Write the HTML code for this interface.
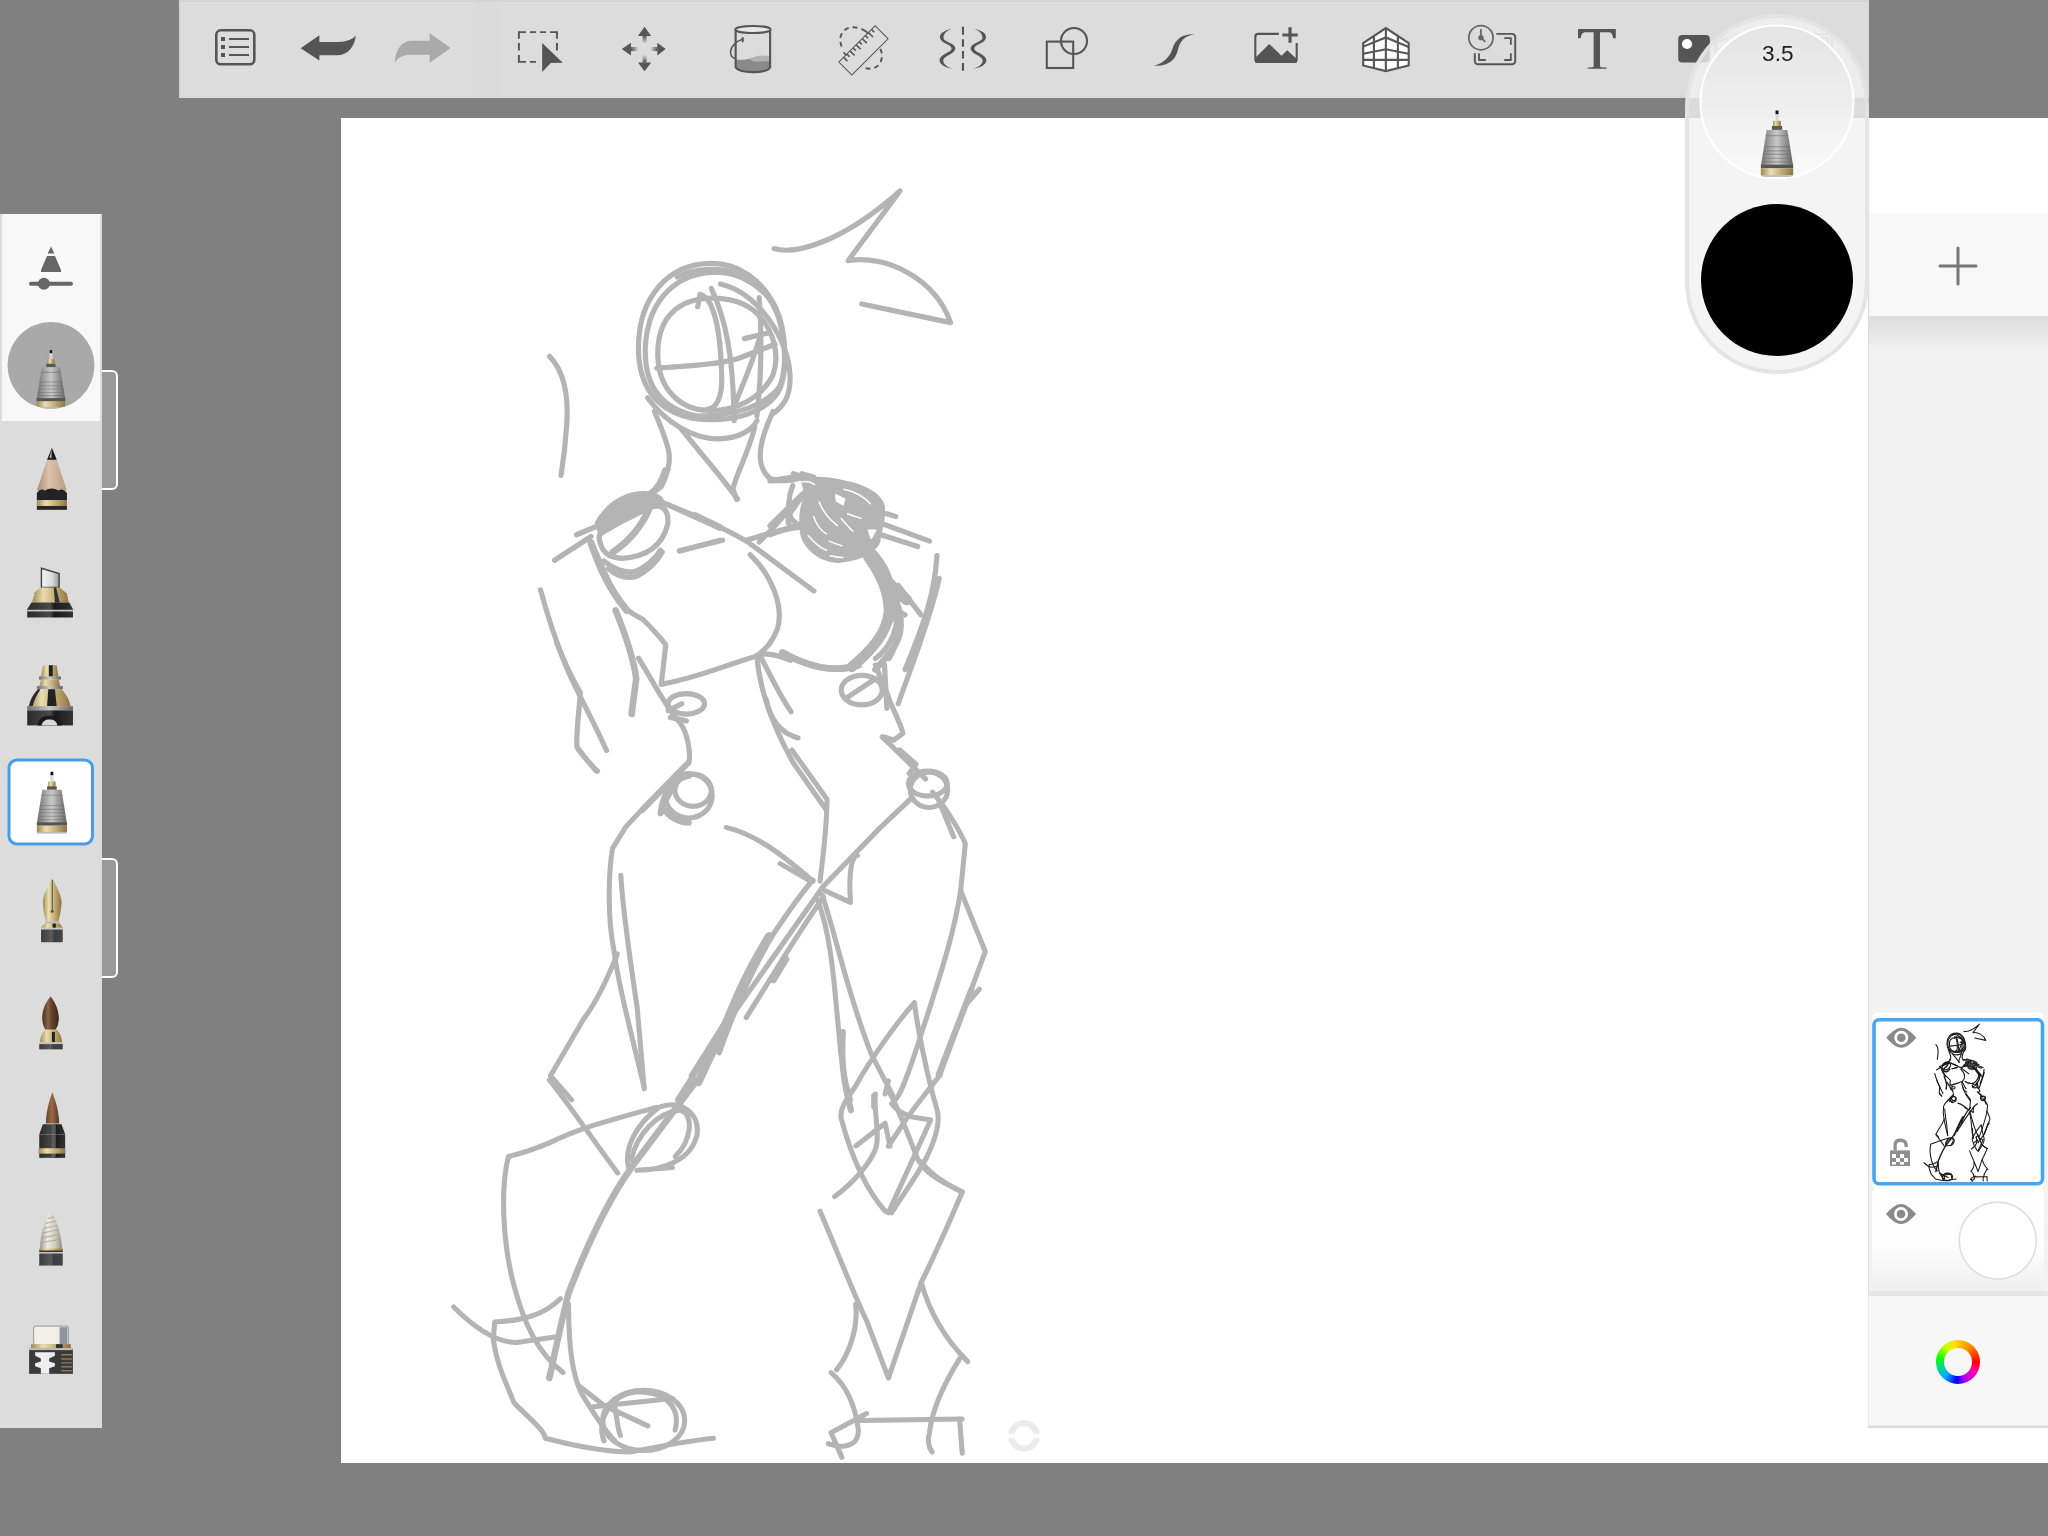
<!DOCTYPE html>
<html><head><meta charset="utf-8">
<style>
*{margin:0;padding:0;box-sizing:border-box}
html,body{width:2048px;height:1536px;overflow:hidden;background:#808080;font-family:"Liberation Sans",sans-serif;position:relative}
.abs{position:absolute}
#canvas{left:341px;top:118px;width:1707px;height:1345px;background:#fff}
#toolbar{left:179px;top:0;width:1690px;height:98px;background:#dcdcdc;border-top:2px solid #d4d4d4;border-left:2px solid #d6d6d6;border-bottom:2px solid #d8d8d8}
#lside{left:0;top:214px;width:102px;height:1214px;background:#dcdcdc}
#lside .top{left:2px;top:0;width:100px;height:207px;background:#f8f8f8}
.bracket{left:102px;width:16px;border:2.3px solid #fff;border-left:none;border-radius:0 6px 6px 0;background:#999}
#rpanel{left:1868px;top:213px;width:180px;height:1215px;background:#f2f2f2;border-left:1.5px solid #dcdcdc}
#plusbox{left:1px;top:0;width:179px;height:103px;background:#f8f8f8}
#pill{left:1685px;top:14px;width:184px;height:360px;border-radius:92px;background:rgba(241,241,241,0.8);border:4px solid rgba(226,226,226,0.9)}
</style></head><body>
<div id="canvas" class="abs"></div>
<svg class="abs" style="left:0;top:0" width="2048" height="1536" viewBox="0 0 2048 1536">
<g fill="none" stroke="#b4b4b4" stroke-linecap="round" stroke-linejoin="round">
<!-- chunk1: region 520,170 scale 4.389 -->
<g transform="translate(520,170) scale(0.22784)" stroke-width="22.8">
<path d="M1115,345 C1200,370 1400,330 1668,92 L1440,398 C1600,370 1820,470 1890,670 L1500,588"/>
<path d="M130,818 C190,880 215,980 205,1120 C200,1200 190,1280 180,1340"/>
<path d="M840,410 C650,410 520,560 520,780 C520,950 600,1060 760,1090 C900,1110 1060,1080 1130,980 C1180,900 1170,700 1120,600 C1060,480 960,410 840,410 Z"/>
<path d="M880,450 C700,440 560,560 550,780 C545,950 620,1050 780,1080 C950,1080 1080,1030 1140,950 C1180,850 1160,650 1090,560 C1040,500 960,455 880,450 Z"/>
<path d="M800,565 C680,580 600,660 605,820 C610,960 700,1050 820,1055 C950,1060 1060,1000 1110,900 C1140,820 1120,700 1030,620 C970,570 880,555 800,565 Z"/>
<path d="M690,470 C760,430 900,420 1000,470"/>
<path d="M560,1000 C640,1110 760,1180 870,1180 C960,1180 1020,1140 1040,1100"/>
<path d="M880,500 C1050,540 1180,750 1185,900 C1190,1000 1150,1040 1110,1070"/>
<path d="M780,600 L790,545 C850,560 880,700 885,900 C890,1000 860,1050 820,1050"/>
<path d="M840,520 C900,650 935,800 940,1100"/>
<path d="M600,870 C700,860 850,860 950,830 C1030,800 1080,780 1120,765"/>
<path d="M1050,740 C1020,850 970,960 930,1060"/>
<path d="M985,740 L1090,715"/>
<path d="M1050,560 C1060,700 1060,900 1040,1080"/>
<path d="M590,1060 C620,1130 650,1200 655,1250 C660,1300 640,1350 620,1390 L580,1420"/>
<path d="M710,1140 C790,1240 880,1340 955,1445"/>
<path d="M1030,1130 C1000,1250 950,1330 935,1400 L950,1445"/>
<path d="M1110,1060 C1080,1130 1050,1200 1055,1270 C1060,1320 1090,1360 1120,1360 L1250,1340"/>
</g>
<!-- chunk2: region 520,460 scale 4.389 -->
<g transform="translate(520,460) scale(0.22784)" stroke-width="22.8">
<path d="M600,175 C700,220 850,270 1000,360 L1290,575"/>
<path d="M700,398 L890,352"/>
<path d="M1010,415 C1100,500 1160,640 1130,740 C1100,820 1060,840 1040,860 C900,900 800,950 620,985 L640,810 C600,760 560,720 540,700 C480,670 440,640 420,600 L330,400"/>
<path d="M90,570 C120,680 160,800 200,900 C240,1000 300,1100 380,1275"/>
<path d="M160,800 C200,900 240,980 265,1020 C260,1100 245,1200 250,1260 C280,1300 310,1340 340,1365"/>
<path d="M420,660 C460,760 500,880 510,960 L490,1115" stroke-width="28.8"/>
<path d="M520,870 C600,1000 650,1100 700,1150 C740,1200 750,1300 740,1330"/>
<ellipse cx="730" cy="1070" rx="80" ry="45"/>
<path d="M650,1100 L710,1070 M660,1130 L730,1145"/>
<path d="M1040,860 C1050,1000 1100,1150 1200,1330 L1340,1530"/>
<path d="M1060,870 C1100,950 1150,1050 1190,1105 M1080,1050 C1100,1150 1150,1200 1220,1220"/>
<path d="M1160,845 C1250,900 1350,930 1450,915 C1550,850 1620,760 1640,650 C1650,540 1600,450 1540,390"/>
<path d="M1180,860 C1280,910 1380,940 1470,900 C1560,840 1630,740 1660,620" stroke-width="16.8"/>
<path d="M1000,350 C1100,320 1200,290 1220,290 M1050,360 C1130,280 1200,200 1250,140 M1200,60 L1290,90 L1180,240 C1170,280 1180,300 1220,290"/>
<path d="M1830,420 C1820,600 1760,750 1690,920 M1840,520 C1800,700 1720,900 1660,1070"/>
<path d="M1520,380 C1600,520 1660,600 1670,700 C1680,800 1620,850 1560,920" stroke-width="28.8"/>
<path d="M1640,650 L1690,680 M1660,550 L1760,680"/>
<ellipse cx="1500" cy="1010" rx="90" ry="65"/>
<path d="M1440,1040 L1560,960 M1560,900 C1600,1000 1620,1040 1620,1050"/>
<path d="M1620,1050 C1640,1100 1680,1180 1680,1200 L1640,1230 L1600,1215 M1590,1215 L1780,1400 M1600,900 L1610,1090"/>
<ellipse cx="1790" cy="1420" rx="85" ry="55"/>
<ellipse cx="760" cy="1450" rx="80" ry="70"/>
<path d="M740,1330 L540,1536 M690,1400 L620,1536"/>
</g>
<!-- right shoulder: region 770,460 scale 10.97 -->
<g transform="translate(770,460) scale(0.09116)" stroke-width="58">
<path fill="#b4b4b4" stroke="none" d="M330,200 C450,180 600,170 800,220 C1000,260 1180,330 1250,470 C1290,600 1230,750 1210,900 C1150,1050 950,1110 750,1130 C550,1120 400,1000 340,850 C300,700 320,500 380,380 Z"/>
<path d="M330,190 L350,150 L480,190 M250,280 C200,400 190,550 230,640 C280,700 330,720 370,730 M0,720 L350,380 M0,820 C100,780 200,750 330,740 M1100,650 L1750,890 M1000,750 L1620,950 M1280,590 L1380,620 M0,230 C100,220 200,240 330,200"/>
<path d="M1050,1000 C1150,1200 1300,1350 1500,1536" stroke-width="120"/>
<g stroke="#fff" stroke-width="16">
<path d="M810,320 C950,350 1050,420 1100,480 M540,460 C580,570 650,650 740,720 M480,620 C500,700 560,780 620,810 M780,640 C830,700 870,750 910,780 M850,590 C900,610 960,630 1000,640 M420,830 C480,900 540,960 620,990 M650,890 C700,910 740,930 790,940 M660,1050 C700,1060 750,1070 800,1070 M350,240 C400,230 450,240 490,270"/>
<path fill="#fff" d="M720,380 L820,430 L800,490 L730,450 Z M1080,770 L1160,770 L1110,860 Z"/>
</g>
</g>
<!-- left shoulder: region 540,470 scale 10.97 -->
<g transform="translate(540,470) scale(0.09116)" stroke-width="58">
<path fill="#b4b4b4" stroke="none" d="M600,580 C700,380 900,230 1150,230 C1300,240 1380,300 1360,380 C1250,420 1150,470 1050,520 C900,590 780,660 650,740 Z"/>
<path d="M400,710 L1100,420 M160,990 L560,730"/>
<path d="M800,900 C950,800 1100,650 1200,420" stroke-width="75"/>
<path d="M1250,400 C1350,380 1420,450 1400,600 C1350,800 1200,950 900,970 C800,960 700,940 660,800 C640,740 650,700 680,680"/>
<path d="M700,1000 C800,1080 900,1120 1000,1120 C1150,1100 1280,950 1320,880 M750,1080 C850,1170 950,1190 1050,1170 C1200,1100 1300,980 1340,900"/>
<path d="M560,800 C650,1050 750,1300 950,1536" stroke-width="80"/>
<path d="M1400,380 C1600,470 1800,560 1975,640 M1700,490 L1975,620 M1530,890 L1975,770 M1370,0 C1320,150 1250,230 1200,260"/>
</g>
<!-- right breast band: region 740,540 scale 5.908 -->
<g transform="translate(740,540) scale(0.16927)" stroke-width="31">
<path d="M760,100 C830,200 880,300 880,420 C870,550 780,650 660,750" stroke-width="62"/>
<path d="M800,120 C880,220 930,320 930,450 C920,560 880,640 800,700 M900,380 C930,480 950,600 880,700"/>
<path d="M250,665 C350,720 450,760 560,760 C620,760 660,750 700,740" stroke-width="40"/>
<path d="M100,680 C150,660 220,680 300,710"/>
</g>
<!-- chunk3: region 520,750 scale 4.2667 -->
<g transform="translate(520,750) scale(0.234375)" stroke-width="21.6">
<path d="M250,0 L325,90"/>
<path d="M720,50 C650,120 550,220 450,330 L395,420 C380,500 370,700 400,850 C420,1000 460,1150 530,1440"/>
<path d="M430,535 C440,700 470,900 500,1100 L530,1445"/>
<path d="M415,870 C380,960 330,1070 270,1150 L130,1390 L220,1493"/>
<ellipse cx="720" cy="195" rx="100" ry="95"/>
<path d="M620,260 C650,300 700,310 720,310 M600,270 C610,180 660,120 720,110" stroke-width="26.4"/>
<path d="M880,330 C1000,360 1100,430 1250,560 M1110,485 L1240,560"/>
<path d="M1160,0 L1310,210 C1310,300 1300,400 1280,560"/>



<path d="M1300,600 L1410,650 C1400,500 1420,450 1440,450"/>
<ellipse cx="1745" cy="170" rx="80" ry="75"/>
<path d="M1660,100 L1690,60 L1620,0"/>
<path d="M1760,180 C1820,250 1880,350 1900,400 L1880,600 C1850,800 1780,1000 1700,1250 C1650,1400 1620,1480 1600,1493"/>
<path d="M1780,200 L1850,370"/>
<path d="M1880,600 C1900,650 1940,750 1985,860 L1790,1390 M1960,1020 L1900,1090"/>
<path d="M1270,640 C1330,800 1340,1000 1360,1200 C1370,1350 1390,1430 1410,1493"/>
<path d="M1290,620 C1350,800 1400,1050 1500,1300 L1600,1493"/>

</g>
<!-- staff: region 640,780 scale 4.8 -->
<g transform="translate(640,780) scale(0.20833)" stroke-width="25">
<path d="M1300,90 L1152,230 L880,510 L640,850 L400,1190 L180,1536"/>
<path d="M830,480 C760,560 700,650 640,740 C560,870 480,1030 380,1310"/>
<path d="M880,560 C800,680 720,800 660,900 L510,1140"/>
<path d="M620,750 C560,850 500,950 420,1150 L280,1450" stroke-width="40"/>
<path d="M700,860 L640,960 M420,1150 L250,1420" stroke-width="32"/>
</g>
<!-- knee diamond: region 820,980 scale 6.144 -->
<g transform="translate(820,980) scale(0.16276)" stroke-width="31.2">
<path d="M420,680 C480,780 540,950 600,1100 C650,1180 700,1220 870,1300"/>
<path d="M580,140 C480,250 300,500 220,650 C150,750 120,800 130,850 C170,1000 250,1250 400,1420 L440,1430"/>
<path d="M580,140 C600,300 660,600 720,800 C740,880 700,1000 650,1100 C580,1230 500,1330 440,1430"/>
<path d="M737,584 C650,700 560,800 480,930 L420,1020"/>
<path d="M680,860 L560,840 C500,820 460,790 440,760 M680,860 L420,1430"/>
<path d="M340,700 C330,800 360,900 350,1000 C340,1100 200,1250 90,1330"/>
<path d="M220,1020 L400,880 L430,1020 M420,620 L400,700 M330,710 L330,780"/>
<path d="M140,320 C130,500 140,600 190,800 M930,60 L730,580" stroke-width="38.4"/>
</g>
<!-- chunk4: region 440,1080 scale 3.657 -->
<g transform="translate(440,1080) scale(0.27344)" stroke-width="18.6">
<path d="M400,0 C480,100 560,220 650,340"/>
<path d="M940,0 L700,320 C600,460 520,650 470,780 C440,900 420,1000 400,1090" stroke-width="24"/>
<path d="M690,320 C670,250 720,160 800,100 C880,70 950,120 940,200 C920,290 820,330 720,330 L850,320"/>
<path d="M700,290 C720,200 790,120 880,110 C930,130 920,220 860,280" />
<path d="M790,100 C650,140 520,170 400,230 C330,260 290,270 250,280 C220,400 230,600 270,750 C310,900 360,1000 450,1070"/>
<path d="M50,830 C120,900 200,960 280,960 L420,940"/>
<path d="M440,800 C380,860 300,880 200,885 L195,950 C210,1050 240,1100 270,1180 C340,1250 380,1280 385,1310 C500,1340 600,1360 700,1360 C800,1340 900,1320 1000,1310"/>
<path d="M470,820 C470,950 480,1080 520,1150 C580,1250 620,1300 640,1320"/>
<ellipse cx="745" cy="1245" rx="150" ry="110"/>
<path d="M600,1320 C570,1250 620,1150 720,1140 C830,1140 880,1200 860,1280"/>
<path d="M560,1195 L850,1165 M620,1200 L760,1265 M640,1200 C650,1250 650,1280 660,1300 M510,1120 L600,1190"/>

<path d="M1760,300 C1800,350 1850,380 1910,410"/>
<path d="M1390,480 C1450,620 1520,800 1560,880 L1640,1090 L1760,740 C1790,680 1850,550 1910,410"/>
<path d="M1520,820 C1530,900 1500,1000 1450,1060"/>
<path d="M1760,740 C1790,850 1850,950 1930,1030"/>
<path d="M1900,1020 C1850,1100 1800,1200 1790,1290 C1780,1320 1790,1350 1800,1360 M1900,1240 L1910,1365"/>
<path d="M1430,1070 C1490,1120 1520,1200 1530,1280 C1530,1320 1510,1340 1460,1340 L1420,1330 M1430,1290 L1470,1380 M1430,1290 L1560,1220 M1540,1245 L1910,1240"/>
</g>
</g>
<circle cx="1024" cy="1435.8" r="12.8" fill="none" stroke="#ebebeb" stroke-width="6.2"/><rect x="1005" y="1433.8" width="38" height="4.1" fill="#fff"/>
</svg>

<div id="toolbar" class="abs"></div>
<svg class="abs" style="left:0;top:0" width="2048" height="100" viewBox="0 0 2048 100">
<defs>
<linearGradient id="gU" x1="0" y1="0" x2="0" y2="1"><stop offset="0" stop-color="#555"/><stop offset="1" stop-color="#555" stop-opacity="0"/></linearGradient>
<linearGradient id="gD" x1="0" y1="1" x2="0" y2="0"><stop offset="0" stop-color="#555"/><stop offset="1" stop-color="#555" stop-opacity="0"/></linearGradient>
<linearGradient id="gL" x1="0" y1="0" x2="1" y2="0"><stop offset="0" stop-color="#555"/><stop offset="1" stop-color="#555" stop-opacity="0"/></linearGradient>
<linearGradient id="gR" x1="1" y1="0" x2="0" y2="0"><stop offset="0" stop-color="#555"/><stop offset="1" stop-color="#555" stop-opacity="0"/></linearGradient>
</defs>
<!-- separator shade -->
<rect x="473" y="2" width="26" height="94" fill="#d8d8d8" opacity="0.6"/>
<!-- list -->
<rect x="216.3" y="30.3" width="38" height="34" rx="4.5" fill="none" stroke="#555" stroke-width="2.6"/>
<g fill="#555"><rect x="221" y="37" width="4" height="4"/><rect x="221" y="45" width="4" height="4"/><rect x="221" y="53" width="4" height="4"/></g>
<g stroke="#555" stroke-width="2.2"><path d="M229,39 L249,39 M229,47 L249,47 M229,55 L249,55"/></g>
<!-- undo -->
<path fill="#555" d="M300.6,48.3 L319.4,35.2 L319.4,42 L338,42 C347,42 353,39 355.8,35.6 C355,46 348,55.2 338,55.2 L319.4,55.2 L319.4,60.5 Z"/>
<!-- redo -->
<path fill="#aaa" d="M450.5,48.1 L429.7,33.2 L429.7,40.7 L412,40.7 C402,40.7 395,50 394.9,62.7 C398,57 404,54.8 412,54.8 L429.7,54.8 L429.7,62.7 Z"/>
<!-- select -->
<g transform="translate(500,15) scale(0.087889)">
<path fill="none" stroke="#555" stroke-width="22" d="M215,270 L215,195 L295,195 M570,195 L648,195 L648,270 M215,455 L215,533 L295,533 M215,320 L215,405 M340,195 L410,195 M455,195 L525,195 M648,320 L648,405 M340,533 L410,533"/>
<path fill="#555" d="M480,318 L715,543 L578,545 L480,648 Z"/>
<!-- move -->
<g fill="#555">
<path d="M1570,238 L1645,135 L1720,238 Z M1570,540 L1645,640 L1720,540 Z M1490,315 L1385,388 L1490,460 Z M1790,315 L1885,388 L1790,460 Z"/>
<rect x="1622" y="236" width="46" height="90" fill="url(#gU)"/>
<rect x="1622" y="452" width="46" height="90" fill="url(#gD)"/>
<rect x="1488" y="365" width="90" height="46" fill="url(#gL)"/>
<rect x="1710" y="365" width="82" height="46" fill="url(#gR)"/>
</g>
</g>
<!-- bucket -->
<g transform="translate(720,15) scale(0.087889)">
<path fill="#8a8a8a" d="M175,505 C260,520 330,500 400,480 C470,460 540,470 570,480 L570,595 C540,640 440,650 375,650 C300,650 200,640 175,595 Z"/>
<path fill="#b2b2b2" d="M330,500 C400,470 470,450 570,470 L570,525 C520,520 450,540 380,530 Z"/>
<path fill="none" stroke="#555" stroke-width="24" d="M178,170 L178,595 C200,640 300,650 375,650 C450,650 550,640 570,595 L570,170"/>
<ellipse cx="375" cy="165" rx="200" ry="40" fill="#e8e8e8" stroke="#555" stroke-width="24"/>
<path fill="none" stroke="#555" stroke-width="16" d="M258,275 C180,300 120,360 120,420 C120,470 150,490 178,495"/>
<ellipse cx="258" cy="280" rx="14" ry="32" fill="#555"/>
</g>
<!-- ruler -->
<g transform="translate(720,15) scale(0.087889)">
<g fill="none" stroke="#555" stroke-width="22">
<path d="M1360,535 L1765,130 L1905,270 L1500,675 Z"/>
<path stroke-dasharray="55,45" d="M1655,185 C1610,150 1540,130 1470,145 C1400,165 1360,230 1370,300 C1375,340 1385,370 1400,395"/>
<path stroke-dasharray="55,45" d="M1825,385 C1850,440 1850,510 1810,565 C1770,610 1700,625 1620,595"/>
<path fill="#dcdcdc" stroke="none" d="M1360,535 L1765,130 L1905,270 L1500,675 Z"/>
<path stroke-width="18" d="M1410,485 L1450,525 M1445,445 L1475,475 M1480,410 L1530,460 M1515,375 L1545,405 M1550,340 L1600,390 M1585,305 L1615,335 M1620,270 L1670,320 M1655,235 L1685,265 M1690,200 L1740,250 M1725,165 L1755,195 M1405,425 L1440,460 M1655,180 L1690,215"/>
</g>
</g>
<!-- symmetry -->
<g transform="translate(925,15) scale(0.087889)" fill="#555">
<path fill="none" stroke="#555" stroke-width="24" d="M432,135 L432,225 M432,275 L432,360 M432,410 L432,495 M432,545 L432,635"/>
<path d="M305,158 C220,170 160,210 170,262 C185,325 300,335 303,380 C305,425 165,445 165,515 C168,565 230,598 310,612 C250,592 208,560 208,515 C208,465 345,440 345,380 C345,320 210,305 210,262 C210,215 240,178 305,158 Z"/>
<path d="M 559,158 C 644,170 704,210 694,262 C 679,325 564,335 561,380 C 559,425 699,445 699,515 C 696,565 634,598 554,612 C 614,592 656,560 656,515 C 656,465 519,440 519,380 C 519,320 654,305 654,262 C 654,215 624,178 559,158 Z"/>
</g>
<!-- shapes -->
<g fill="none" stroke="#555" stroke-width="2.1">
<rect x="1046.8" y="41.6" width="26.4" height="26.4"/>
<circle cx="1074" cy="41" r="13"/>
</g>
<!-- s-curve -->
<g transform="translate(1140,15) scale(0.087889)">
<path fill="#555" d="M155,575 C260,550 335,490 370,380 C405,270 480,215 625,215 C515,235 455,290 432,395 C405,510 320,590 155,575 Z"/>
<!-- image+ -->
<path fill="none" stroke="#555" stroke-width="24" d="M1580,215 L1345,215 Q1312,215 1312,248 L1312,500 Q1312,533 1345,533 L1750,533 Q1783,533 1783,500 L1783,320"/>
<path fill="#555" d="M1312,485 L1470,330 L1610,465 L1675,400 L1783,500 L1783,545 L1312,545 Z"/>
<path fill="none" stroke="#555" stroke-width="36" d="M1620,228 L1795,228 M1707,140 L1707,315"/>
</g>
<!-- perspective grid -->
<g transform="translate(1350,15) scale(0.087889)" stroke="#555" stroke-width="24" stroke-linejoin="miter">
<path fill="#fff" d="M150,320 L408,148 L668,320 L668,575 L408,638 L150,575 Z"/>
<path fill="none" d="M272,240 L272,598 M408,148 L408,638 M545,240 L545,598 M150,360 L408,255 L668,365 M150,440 L408,390 L668,440 M150,510 L668,510"/>
</g>
<!-- clock frame -->
<g transform="translate(1350,15) scale(0.087889)" fill="none" stroke="#555">
<circle cx="1490" cy="258" r="138" stroke="#666" stroke-width="20"/>
<path stroke="#666" stroke-width="20" d="M1490,160 L1490,258 L1540,305"/>
<circle cx="1490" cy="258" r="30" fill="#666" stroke="none"/>
<path stroke-width="22" d="M1665,215 L1840,215 Q1880,215 1880,255 L1880,520 Q1880,560 1840,560 L1460,560 Q1420,560 1420,520 L1420,435"/>
<path stroke-width="20" d="M1755,262 L1830,262 L1830,338 M1468,435 L1468,512 L1545,512 M1755,512 L1830,512 L1830,435"/>
</g>
<!-- T -->
<g transform="translate(1560,15) scale(0.087889)">
<path fill="#555" d="M205,160 L635,160 L635,265 L605,265 C600,230 590,200 560,195 L455,195 L455,580 C455,592 470,598 530,598 L530,612 L315,612 L315,598 C370,598 383,592 383,580 L383,195 L280,195 C250,200 240,230 235,265 L205,265 Z"/>
<rect x="1345" y="228" width="360" height="312" rx="45" fill="#555"/>
<circle cx="1445" cy="330" r="58" fill="#fff"/>
<path fill="none" stroke="#b0b0b0" stroke-width="22" d="M1775,430 L1775,320 L1895,265 L1895,300"/>
</g>
<path fill="none" stroke="#b0b0b0" stroke-width="2" d="M1812,34 L1832,34 L1832,47 M1820,38 L1828,38 L1828,43"/>
</svg>

<div id="lside" class="abs"></div>
<svg class="abs" style="left:0;top:200px" width="130" height="1240" viewBox="0 200 130 1240">
<defs>
<linearGradient id="silv" x1="0" y1="0" x2="1" y2="0">
<stop offset="0" stop-color="#707070"/><stop offset="0.3" stop-color="#a8a8a8"/><stop offset="0.5" stop-color="#c8c8c8"/><stop offset="0.75" stop-color="#959595"/><stop offset="1" stop-color="#666"/></linearGradient>
<linearGradient id="gold" x1="0" y1="0" x2="1" y2="0">
<stop offset="0" stop-color="#a08850"/><stop offset="0.3" stop-color="#e9ddb0"/><stop offset="0.6" stop-color="#c7b27a"/><stop offset="1" stop-color="#8c7440"/></linearGradient>
<linearGradient id="blk" x1="0" y1="0" x2="1" y2="0">
<stop offset="0" stop-color="#2a2a2a"/><stop offset="0.5" stop-color="#4a4a4a"/><stop offset="0.6" stop-color="#1a1a1a"/><stop offset="1" stop-color="#333"/></linearGradient>
<linearGradient id="dgrey" x1="0" y1="0" x2="1" y2="0">
<stop offset="0" stop-color="#3c3c3c"/><stop offset="0.5" stop-color="#5a5a5a"/><stop offset="0.6" stop-color="#3a3f44"/><stop offset="1" stop-color="#444"/></linearGradient>
<linearGradient id="wood" x1="0" y1="0" x2="1" y2="0">
<stop offset="0" stop-color="#a88a70"/><stop offset="0.4" stop-color="#dcc3ad"/><stop offset="1" stop-color="#b69a82"/></linearGradient>
<linearGradient id="brown" x1="0" y1="0" x2="1" y2="0">
<stop offset="0" stop-color="#4a3020"/><stop offset="0.35" stop-color="#8a6548"/><stop offset="0.6" stop-color="#5e3f28"/><stop offset="1" stop-color="#3e281a"/></linearGradient>
<linearGradient id="brown2" x1="0" y1="0" x2="1" y2="0">
<stop offset="0" stop-color="#6a4228"/><stop offset="0.45" stop-color="#9a6a48"/><stop offset="1" stop-color="#5a3620"/></linearGradient>
<linearGradient id="cone" x1="0" y1="0" x2="1" y2="0">
<stop offset="0" stop-color="#9d9a90"/><stop offset="0.35" stop-color="#eeeae0"/><stop offset="0.7" stop-color="#cfcabd"/><stop offset="1" stop-color="#8e8a80"/></linearGradient>
<g id="techpen">
<!-- in zoom coords (scale 8.306), tip at top -->
<rect x="252" y="970" width="26" height="80" fill="#d8d8d8"/>
<rect x="254" y="970" width="22" height="28" fill="#111"/>
<rect x="235" y="1050" width="60" height="40" fill="url(#gold)"/>
<rect x="225" y="1090" width="80" height="30" fill="#5a5a52"/>
<path d="M185,1120 L345,1120 L390,1400 L140,1400 Z" fill="url(#silv)"/>
<g stroke="#6a6a6a" stroke-width="9" opacity="0.45"><path d="M178,1165 L352,1165 M166,1250 L364,1250 M162,1282 L368,1282 M158,1310 L372,1310 M154,1340 L376,1340 M150,1368 L380,1368"/></g>
<rect x="140" y="1390" width="250" height="28" fill="#555"/>
<rect x="140" y="1418" width="250" height="52" fill="url(#gold)"/>
<rect x="140" y="1470" width="250" height="14" fill="#bbb"/>
</g>
</defs>
<!-- top white section -->
<rect x="2" y="214" width="98" height="207" fill="#f8f8f8"/>
<!-- brush size icon -->
<g fill="#666">
<path d="M47.6,253.5 L54.4,253.5 L51,246.5 Z"/>
<path d="M47,256 L55,256 L61,270 L61,272 L41,272 L41,270 Z"/>
<path d="M31,283.8 L71,283.8" stroke="#666" stroke-width="4" stroke-linecap="round"/>
<circle cx="43.9" cy="283.8" r="6"/>
</g>
<!-- grey circle with pen -->
<circle cx="51" cy="365.4" r="43.5" fill="#a9a9a9"/>
<clipPath id="cc"><circle cx="51" cy="365.4" r="43.5"/></clipPath>
<g clip-path="url(#cc)"><g transform="translate(20.6,238.9) scale(0.11456)"><use href="#techpen"/></g></g>
<!-- pencil -->
<g transform="translate(20,440) scale(0.12039)">
<path d="M225,165 L305,165 L390,420 L140,420 Z" fill="url(#wood)"/>
<path d="M265,65 L225,165 L305,165 Z" fill="#1a1a1a"/>
<path d="M262,75 L245,150 L262,150 Z" fill="#bbb"/>
<path d="M140,440 Q172,395 205,420 Q262,385 320,420 Q355,395 390,440 L390,500 L140,500 Z" fill="#232323"/>
<rect x="140" y="500" width="250" height="48" fill="url(#gold)"/>
<rect x="140" y="548" width="250" height="32" fill="#262626"/>
</g>
<!-- marker -->
<g transform="translate(20,440) scale(0.12039)">
<linearGradient id="felt" x1="0" y1="0" x2="1" y2="0"><stop offset="0" stop-color="#f4f4f4"/><stop offset="0.6" stop-color="#dadada"/><stop offset="1" stop-color="#9a9a9a"/></linearGradient><path d="M178,1065 L325,1110 L325,1225 L178,1225 Z" fill="url(#felt)" stroke="#444" stroke-width="12"/>
<path d="M165,1225 L330,1225 L395,1280 L110,1280 Z" fill="url(#gold)"/>
<path d="M120,1280 L390,1280 L405,1350 L100,1350 Z" fill="url(#gold)"/>
<path d="M280,1225 L300,1225 L330,1350 L290,1350 Z" fill="#2e3338"/>
<path d="M95,1350 L410,1350 L440,1405 L440,1475 L60,1475 L60,1405 Z" fill="url(#blk)"/>
<rect x="60" y="1410" width="380" height="14" fill="#c8c8c8"/>
</g>
<!-- ink/airbrush pen -->
<g transform="translate(20,655) scale(0.12039)">
<path d="M190,85 L305,85 L320,180 L175,180 Z" fill="url(#gold)"/>
<rect x="240" y="85" width="32" height="95" fill="#222"/>
<rect x="158" y="178" width="182" height="27" fill="url(#silv)"/>
<path d="M175,205 L320,205 L335,260 L160,260 Z" fill="url(#gold)"/>
<rect x="140" y="258" width="215" height="27" fill="url(#silv)"/>
<path d="M150,285 L345,285 C380,320 410,370 420,425 L75,425 C85,370 115,320 150,285 Z" fill="url(#gold)"/>
<path d="M235,285 L290,285 L305,425 L225,425 Z" fill="#222"/>
<path d="M150,285 L170,285 C140,330 115,380 105,425 L75,425 C85,370 115,320 150,285 Z" fill="#2a2a2a"/>
<rect x="60" y="425" width="380" height="35" fill="url(#silv)"/>
<rect x="60" y="460" width="380" height="125" fill="url(#blk)"/>
<path d="M145,585 C150,530 195,505 245,505 C295,505 340,530 345,585 Z" fill="#1a1a1a"/>
<path d="M180,585 C185,550 210,535 245,535 C280,535 305,550 310,585 Z" fill="#d8d8d8"/>
</g>
<!-- selected box -->
<rect x="9" y="760" width="83.5" height="84" rx="8" fill="#fff" stroke="#4a9be6" stroke-width="3"/>
<g transform="translate(20,655) scale(0.12039)"><use href="#techpen"/></g>
<!-- fountain nib -->
<g transform="translate(20,870) scale(0.12039)">
<path d="M268,70 C300,130 340,200 345,260 C345,330 330,380 320,430 L215,430 C205,380 190,330 190,260 C195,200 235,130 268,70 Z" fill="url(#gold)"/>
<path d="M268,80 L268,340" stroke="#555" stroke-width="9"/>
<circle cx="268" cy="343" r="13" fill="#555"/>
<rect x="208" y="428" width="120" height="18" fill="#bbb"/>
<path d="M205,445 L330,445 L355,480 L175,480 Z" fill="url(#gold)"/>
<rect x="270" y="445" width="28" height="35" fill="#222"/>
<rect x="175" y="480" width="180" height="14" fill="#c8c8c8"/>
<rect x="175" y="494" width="180" height="106" fill="url(#dgrey)"/>
</g>
<!-- round brush -->
<g transform="translate(20,870) scale(0.12039)">
<path d="M255,1050 C310,1120 330,1200 320,1260 C315,1300 300,1320 290,1330 L215,1330 C195,1310 185,1270 185,1230 C185,1160 210,1100 255,1050 Z" fill="url(#brown)"/>
<path d="M215,1325 L300,1325 C325,1340 345,1380 350,1430 L165,1430 C170,1380 190,1340 215,1325 Z" fill="url(#gold)"/>
<rect x="265" y="1345" width="25" height="85" fill="#222"/>
<rect x="160" y="1430" width="195" height="16" fill="#c0c0c0"/>
<rect x="160" y="1446" width="195" height="44" fill="url(#dgrey)"/>
</g>
<!-- pointed brush -->
<g transform="translate(20,1085) scale(0.12039)">
<path d="M268,60 C300,140 325,230 325,320 L215,320 C215,230 240,140 268,60 Z" fill="url(#brown2)"/>
<path d="M190,325 L345,325 L375,410 L160,410 Z" fill="url(#blk)"/>
<rect x="160" y="410" width="215" height="195" fill="url(#blk)"/>
<rect x="268" y="330" width="30" height="270" fill="#888" opacity="0.5"/>
<rect x="155" y="525" width="220" height="45" fill="url(#gold)"/>
</g>
<!-- spiral cone -->
<g transform="translate(20,1085) scale(0.12039)">
<path d="M255,1045 C300,1120 340,1230 350,1360 L165,1360 C170,1230 205,1120 255,1045 Z" fill="url(#cone)"/>
<g stroke="#a9a598" stroke-width="9" opacity="0.8"><path d="M230,1110 L285,1095 M215,1150 L300,1130 M200,1190 L315,1165 M190,1230 L325,1200 M180,1270 L335,1240 M172,1310 L342,1280"/></g>
<rect x="160" y="1358" width="195" height="28" fill="url(#gold)"/>
<rect x="160" y="1375" width="195" height="14" fill="#333"/>
<rect x="160" y="1388" width="195" height="14" fill="#c4c4c4"/>
<rect x="160" y="1400" width="195" height="100" fill="url(#dgrey)"/>
</g>
<!-- eraser -->
<g transform="translate(20,1310) scale(0.05211)">
<rect x="260" y="310" width="670" height="360" rx="45" fill="#f1efe8" stroke="#a8a8a8" stroke-width="25"/>
<rect x="760" y="330" width="150" height="330" fill="#8f959a"/>
<rect x="210" y="655" width="765" height="75" fill="url(#gold)"/>
<rect x="690" y="655" width="130" height="75" fill="#2e3338"/>
<rect x="175" y="730" width="840" height="495" fill="#3a3a3a"/>
<rect x="175" y="730" width="840" height="40" fill="#bdbdbd"/>
<path d="M290,810 L670,810 L670,880 L560,930 L560,990 L670,1020 L670,1080 L560,1120 L560,1225 L400,1225 L400,1120 L290,1080 L290,1020 L400,990 L400,930 L290,880 Z" fill="#eeeeee"/>
<g stroke="#8a7a55" stroke-width="28"><path d="M790,860 L1000,860 M790,940 L1000,940 M790,1015 L1000,1015 M790,1090 L1000,1090 M790,1165 L1000,1165"/></g>
</g>
</svg>

<div class="bracket abs" style="top:370px;height:120px"></div>
<div class="bracket abs" style="top:858px;height:120px"></div>
<div id="rpanel" class="abs"><div id="plusbox" class="abs"></div><div class="abs" style="left:0;top:103px;width:180px;height:36px;background:linear-gradient(#dcdcdc,#f2f2f2)"></div></div>
<svg class="abs" style="left:1866px;top:200px" width="182" height="1240" viewBox="1866 200 182 1240">
<defs>
<linearGradient id="l2g" x1="0" y1="0" x2="0" y2="1"><stop offset="0" stop-color="#fff"/><stop offset="0.6" stop-color="#fcfcfc"/><stop offset="1" stop-color="#efefef"/></linearGradient>
<g id="eye"><path d="M-15,0 C-9,-7 -4,-10 0,-10 C4,-10 9,-7 15,0 C9,7 4,10 0,10 C-4,10 -9,7 -15,0 Z" fill="#8a8a8a"/><circle r="7" fill="#fff"/><circle r="4.3" fill="#8a8a8a"/></g>
</defs>
<path d="M1878,266 L1996,266" stroke="none"/>
<path d="M1940,266 L1976,266 M1958,248 L1958,284" stroke="#777" stroke-width="3" stroke-linecap="round"/>
<!-- layer 1 card -->
<rect x="1872" y="1012.5" width="172" height="177" rx="5" fill="#fff"/>
<rect x="1874" y="1019.8" width="168.5" height="164" rx="5" fill="#fff" stroke="#48a6ee" stroke-width="3.6"/>
<use href="#eye" x="1901.3" y="1037.8"/>
<g fill="#8f8f8f">
<path d="M1893.5,1150.5 L1893.5,1145 C1893.5,1140 1896.5,1138.5 1900.5,1138.5 C1904.5,1138.5 1907.8,1140.5 1907.8,1145.5 L1907.8,1147 L1904.5,1147 L1904.5,1145.5 C1904.5,1143 1903,1142 1900.5,1142 C1898,1142 1896.8,1143 1896.8,1145 L1896.8,1150.5 Z"/>
<rect x="1890" y="1150.4" width="20" height="15.6"/>
</g>
<g fill="#fff"><rect x="1892" y="1154" width="4" height="4"/><rect x="1900" y="1154" width="4" height="4"/><rect x="1896" y="1158" width="4" height="4"/><rect x="1904" y="1158" width="4" height="4"/><rect x="1892" y="1162" width="4" height="2.5"/><rect x="1900" y="1162" width="4" height="2.5"/></g>
<clipPath id="thc"><rect x="1876" y="1022" width="165" height="160"/></clipPath><g clip-path="url(#thc)"><g transform="translate(1867.6,1000.3) scale(0.1243)"><g fill="none" stroke="#1c1c1c" stroke-linecap="round" stroke-linejoin="round" stroke-width="10">

<g transform="translate(520,170) scale(0.22784)" stroke-width="38.8">
<path d="M1115,345 C1200,370 1400,330 1668,92 L1440,398 C1600,370 1820,470 1890,670 L1500,588"/>
<path d="M130,818 C190,880 215,980 205,1120 C200,1200 190,1280 180,1340"/>
<path d="M840,410 C650,410 520,560 520,780 C520,950 600,1060 760,1090 C900,1110 1060,1080 1130,980 C1180,900 1170,700 1120,600 C1060,480 960,410 840,410 Z"/>
<path d="M880,450 C700,440 560,560 550,780 C545,950 620,1050 780,1080 C950,1080 1080,1030 1140,950 C1180,850 1160,650 1090,560 C1040,500 960,455 880,450 Z"/>
<path d="M800,565 C680,580 600,660 605,820 C610,960 700,1050 820,1055 C950,1060 1060,1000 1110,900 C1140,820 1120,700 1030,620 C970,570 880,555 800,565 Z"/>
<path d="M690,470 C760,430 900,420 1000,470"/>
<path d="M560,1000 C640,1110 760,1180 870,1180 C960,1180 1020,1140 1040,1100"/>
<path d="M880,500 C1050,540 1180,750 1185,900 C1190,1000 1150,1040 1110,1070"/>
<path d="M780,600 L790,545 C850,560 880,700 885,900 C890,1000 860,1050 820,1050"/>
<path d="M840,520 C900,650 935,800 940,1100"/>
<path d="M600,870 C700,860 850,860 950,830 C1030,800 1080,780 1120,765"/>
<path d="M1050,740 C1020,850 970,960 930,1060"/>
<path d="M985,740 L1090,715"/>
<path d="M1050,560 C1060,700 1060,900 1040,1080"/>
<path d="M590,1060 C620,1130 650,1200 655,1250 C660,1300 640,1350 620,1390 L580,1420"/>
<path d="M710,1140 C790,1240 880,1340 955,1445"/>
<path d="M1030,1130 C1000,1250 950,1330 935,1400 L950,1445"/>
<path d="M1110,1060 C1080,1130 1050,1200 1055,1270 C1060,1320 1090,1360 1120,1360 L1250,1340"/>
</g>

<g transform="translate(520,460) scale(0.22784)" stroke-width="38.8">
<path d="M600,175 C700,220 850,270 1000,360 L1290,575"/>
<path d="M700,398 L890,352"/>
<path d="M1010,415 C1100,500 1160,640 1130,740 C1100,820 1060,840 1040,860 C900,900 800,950 620,985 L640,810 C600,760 560,720 540,700 C480,670 440,640 420,600 L330,400"/>
<path d="M90,570 C120,680 160,800 200,900 C240,1000 300,1100 380,1275"/>
<path d="M160,800 C200,900 240,980 265,1020 C260,1100 245,1200 250,1260 C280,1300 310,1340 340,1365"/>
<path d="M420,660 C460,760 500,880 510,960 L490,1115" stroke-width="49"/>
<path d="M520,870 C600,1000 650,1100 700,1150 C740,1200 750,1300 740,1330"/>
<ellipse cx="730" cy="1070" rx="80" ry="45"/>
<path d="M650,1100 L710,1070 M660,1130 L730,1145"/>
<path d="M1040,860 C1050,1000 1100,1150 1200,1330 L1340,1530"/>
<path d="M1060,870 C1100,950 1150,1050 1190,1105 M1080,1050 C1100,1150 1150,1200 1220,1220"/>
<path d="M1160,845 C1250,900 1350,930 1450,915 C1550,850 1620,760 1640,650 C1650,540 1600,450 1540,390"/>
<path d="M1180,860 C1280,910 1380,940 1470,900 C1560,840 1630,740 1660,620" stroke-width="28.6"/>
<path d="M1000,350 C1100,320 1200,290 1220,290 M1050,360 C1130,280 1200,200 1250,140 M1200,60 L1290,90 L1180,240 C1170,280 1180,300 1220,290"/>
<path d="M1830,420 C1820,600 1760,750 1690,920 M1840,520 C1800,700 1720,900 1660,1070"/>
<path d="M1520,380 C1600,520 1660,600 1670,700 C1680,800 1620,850 1560,920" stroke-width="49"/>
<path d="M1640,650 L1690,680 M1660,550 L1760,680"/>
<ellipse cx="1500" cy="1010" rx="90" ry="65"/>
<path d="M1440,1040 L1560,960 M1560,900 C1600,1000 1620,1040 1620,1050"/>
<path d="M1620,1050 C1640,1100 1680,1180 1680,1200 L1640,1230 L1600,1215 M1590,1215 L1780,1400 M1600,900 L1610,1090"/>
<ellipse cx="1790" cy="1420" rx="85" ry="55"/>
<ellipse cx="760" cy="1450" rx="80" ry="70"/>
<path d="M740,1330 L540,1536 M690,1400 L620,1536"/>
</g>

<g transform="translate(770,460) scale(0.09116)" stroke-width="98.6">
<path fill="#1c1c1c" stroke="none" d="M330,200 C450,180 600,170 800,220 C1000,260 1180,330 1250,470 C1290,600 1230,750 1210,900 C1150,1050 950,1110 750,1130 C550,1120 400,1000 340,850 C300,700 320,500 380,380 Z"/>
<path d="M330,190 L350,150 L480,190 M250,280 C200,400 190,550 230,640 C280,700 330,720 370,730 M0,720 L350,380 M0,820 C100,780 200,750 330,740 M1100,650 L1750,890 M1000,750 L1620,950 M1280,590 L1380,620 M0,230 C100,220 200,240 330,200"/>
<path d="M1050,1000 C1150,1200 1300,1350 1500,1536" stroke-width="204"/>
<g stroke="#fff" stroke-width="27.2">
<path d="M810,320 C950,350 1050,420 1100,480 M540,460 C580,570 650,650 740,720 M480,620 C500,700 560,780 620,810 M780,640 C830,700 870,750 910,780 M850,590 C900,610 960,630 1000,640 M420,830 C480,900 540,960 620,990 M650,890 C700,910 740,930 790,940 M660,1050 C700,1060 750,1070 800,1070 M350,240 C400,230 450,240 490,270"/>
<path fill="#fff" d="M720,380 L820,430 L800,490 L730,450 Z M1080,770 L1160,770 L1110,860 Z"/>
</g>
</g>

<g transform="translate(540,470) scale(0.09116)" stroke-width="98.6">
<path fill="#1c1c1c" stroke="none" d="M600,580 C700,380 900,230 1150,230 C1300,240 1380,300 1360,380 C1250,420 1150,470 1050,520 C900,590 780,660 650,740 Z"/>
<path d="M400,710 L1100,420 M160,990 L560,730"/>
<path d="M800,900 C950,800 1100,650 1200,420" stroke-width="127.5"/>
<path d="M1250,400 C1350,380 1420,450 1400,600 C1350,800 1200,950 900,970 C800,960 700,940 660,800 C640,740 650,700 680,680"/>
<path d="M700,1000 C800,1080 900,1120 1000,1120 C1150,1100 1280,950 1320,880 M750,1080 C850,1170 950,1190 1050,1170 C1200,1100 1300,980 1340,900"/>
<path d="M560,800 C650,1050 750,1300 950,1536" stroke-width="136"/>
<path d="M1400,380 C1600,470 1800,560 1975,640 M1700,490 L1975,620 M1530,890 L1975,770 M1370,0 C1320,150 1250,230 1200,260"/>
</g>

<g transform="translate(520,750) scale(0.234375)" stroke-width="36.7">
<path d="M250,0 L325,90"/>
<path d="M720,50 C650,120 550,220 450,330 L395,420 C380,500 370,700 400,850 C420,1000 460,1150 530,1440"/>
<path d="M430,535 C440,700 470,900 500,1100 L530,1445"/>
<path d="M415,870 C380,960 330,1070 270,1150 L130,1390 L220,1493"/>
<ellipse cx="720" cy="195" rx="100" ry="95"/>
<path d="M620,260 C650,300 700,310 720,310 M600,270 C610,180 660,120 720,110" stroke-width="44.9"/>
<path d="M880,330 C1000,360 1100,430 1250,560 M1110,485 L1240,560"/>
<path d="M1160,0 L1310,210 C1310,300 1300,400 1280,560"/>

<path d="M1310,480 C1200,600 1050,850 960,1140 M1550,350 L1480,400 C1300,600 1150,850 850,1300" stroke-width="40.8"/>
<path d="M1060,800 C1000,900 900,1100 850,1290 M1000,900 C950,1000 880,1150 760,1420" stroke-width="61.2"/>
<path d="M1300,600 L1410,650 C1400,500 1420,450 1440,450"/>
<ellipse cx="1745" cy="170" rx="80" ry="75"/>
<path d="M1660,100 L1690,60 L1620,0"/>
<path d="M1760,180 C1820,250 1880,350 1900,400 L1880,600 C1850,800 1780,1000 1700,1250 C1650,1400 1620,1480 1600,1493"/>
<path d="M1780,200 L1850,370"/>
<path d="M1880,600 C1900,650 1940,750 1985,860 L1790,1390 M1960,1020 L1900,1090"/>
<path d="M1270,640 C1330,800 1340,1000 1360,1200 C1370,1350 1390,1430 1410,1493"/>
<path d="M1290,620 C1350,800 1400,1050 1500,1300 L1600,1493"/>

</g>

<g transform="translate(820,980) scale(0.16276)" stroke-width="53">
<path d="M420,680 C480,780 540,950 600,1100 C650,1180 700,1220 870,1300"/>
<path d="M580,140 C480,250 300,500 220,650 C150,750 120,800 130,850 C170,1000 250,1250 400,1420 L440,1430"/>
<path d="M580,140 C600,300 660,600 720,800 C740,880 700,1000 650,1100 C580,1230 500,1330 440,1430"/>
<path d="M737,584 C650,700 560,800 480,930 L420,1020"/>
<path d="M680,860 L560,840 C500,820 460,790 440,760 M680,860 L420,1430"/>
<path d="M340,700 C330,800 360,900 350,1000 C340,1100 200,1250 90,1330"/>
<path d="M220,1020 L400,880 L430,1020 M420,620 L400,700 M330,710 L330,780"/>
<path d="M140,320 C130,500 140,600 190,800 M930,60 L730,580" stroke-width="65.3"/>
</g>

<g transform="translate(440,1080) scale(0.27344)" stroke-width="31.6">
<path d="M400,0 C480,100 560,220 650,340"/>
<path d="M940,0 L700,320 C600,460 520,650 470,780 C440,900 420,1000 400,1090" stroke-width="40.8"/>
<path d="M690,320 C670,250 720,160 800,100 C880,70 950,120 940,200 C920,290 820,330 720,330 L850,320"/>
<path d="M700,290 C720,200 790,120 880,110 C930,130 920,220 860,280" />
<path d="M790,100 C650,140 520,170 400,230 C330,260 290,270 250,280 C220,400 230,600 270,750 C310,900 360,1000 450,1070"/>
<path d="M50,830 C120,900 200,960 280,960 L420,940"/>
<path d="M440,800 C380,860 300,880 200,885 L195,950 C210,1050 240,1100 270,1180 C340,1250 380,1280 385,1310 C500,1340 600,1360 700,1360 C800,1340 900,1320 1000,1310"/>
<path d="M470,820 C470,950 480,1080 520,1150 C580,1250 620,1300 640,1320"/>
<ellipse cx="745" cy="1245" rx="150" ry="110"/>
<path d="M600,1320 C570,1250 620,1150 720,1140 C830,1140 880,1200 860,1280"/>
<path d="M560,1195 L850,1165 M620,1200 L760,1265 M640,1200 C650,1250 650,1280 660,1300 M510,1120 L600,1190"/>

<path d="M1760,300 C1800,350 1850,380 1910,410"/>
<path d="M1390,480 C1450,620 1520,800 1560,880 L1640,1090 L1760,740 C1790,680 1850,550 1910,410"/>
<path d="M1520,820 C1530,900 1500,1000 1450,1060"/>
<path d="M1760,740 C1790,850 1850,950 1930,1030"/>
<path d="M1900,1020 C1850,1100 1800,1200 1790,1290 C1780,1320 1790,1350 1800,1360 M1900,1240 L1910,1365"/>
<path d="M1430,1070 C1490,1120 1520,1200 1530,1280 C1530,1320 1510,1340 1460,1340 L1420,1330 M1430,1290 L1470,1380 M1430,1290 L1560,1220 M1540,1245 L1910,1240"/>
</g>
</g></g></g>
<!-- layer 2 card -->
<rect x="1872" y="1189.3" width="172" height="101.6" rx="4" fill="url(#l2g)"/>
<use href="#eye" x="1901" y="1214"/>
<circle cx="1997.7" cy="1240.6" r="38.5" fill="#fff" stroke="#dedede" stroke-width="1.6"/>
<rect x="1868.5" y="1291" width="180" height="5" fill="#e6e6e6"/>
<rect x="1868.5" y="1296" width="180" height="130" fill="#f7f7f7"/>
<rect x="1868" y="1425.5" width="180" height="2.5" fill="#dcdcdc"/>
</svg>
<div class="abs" style="left:1936px;top:1340px;width:44px;height:44px;border-radius:50%;background:conic-gradient(from 90deg,#f00,#f0a 30deg,#a0f 70deg,#00f 95deg,#0af 130deg,#0d8 165deg,#0f0 190deg,#cf0 230deg,#fd0 260deg,#f80 310deg,#f00 360deg)"></div>
<div class="abs" style="left:1944px;top:1348px;width:28px;height:28px;border-radius:50%;background:#f7f7f7"></div>
<div id="pill" class="abs"></div>
<svg class="abs" style="left:1680px;top:0" width="200" height="380" viewBox="1680 0 200 380">
<defs>
<linearGradient id="icg" x1="0" y1="0" x2="0" y2="1"><stop offset="0" stop-color="#e3e3e3"/><stop offset="1" stop-color="#fafafa"/></linearGradient>
</defs>
<circle cx="1777" cy="102" r="76.5" fill="url(#icg)" fill-opacity="0.93" stroke="#fff" stroke-width="2.2"/>
<text x="1777.8" y="61.4" text-anchor="middle" font-family="Liberation Sans" font-size="22.6" fill="#1a1a1a" opacity="0.99" style="will-change:transform">3.5</text>
<clipPath id="icc"><circle cx="1777" cy="102" r="76"/></clipPath>
<g clip-path="url(#icc)"><g transform="translate(1742.8,-14.7) scale(0.1291)"><use href="#techpen"/></g></g>
<circle cx="1777" cy="280" r="76" fill="#000"/>
</svg>
</body></html>
